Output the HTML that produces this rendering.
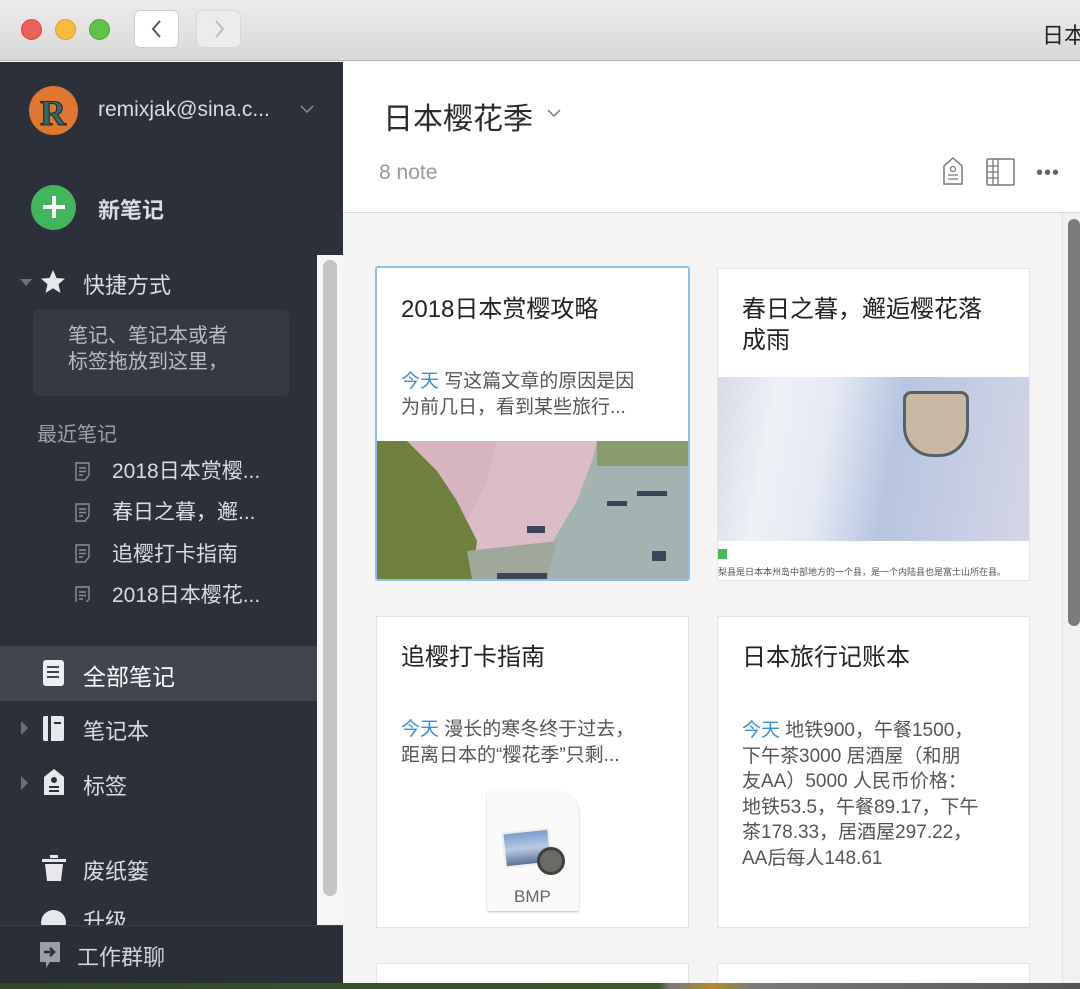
<!DOCTYPE html>
<html><head><meta charset="utf-8"><style>
*{margin:0;padding:0;box-sizing:border-box}
html,body{width:1080px;height:989px;overflow:hidden}
body{position:relative;font-family:"Liberation Sans","Noto Sans CJK SC",sans-serif;background:#f4f4f5}
.a{position:absolute;white-space:nowrap}
.side{color:#d9dce1}
.card{position:absolute;background:#fff;border:1px solid #e4e4e4;overflow:hidden}
.ct{position:absolute;left:24px;font-size:24px;color:#222;line-height:31px}
.cp{position:absolute;left:24px;font-size:19px;color:#555;line-height:26px}
.blue{color:#3a8ed8}
</style></head><body>
<!-- title bar -->
<div class="a" style="left:0;top:0;width:1080px;height:61px;background:linear-gradient(#ececec,#d8d8d8);border-bottom:1px solid #b9b9b9"></div>
<div class="a" style="left:21px;top:19px;width:21px;height:21px;border-radius:50%;background:#ee5f57;border:1px solid #d6483f"></div>
<div class="a" style="left:55px;top:19px;width:21px;height:21px;border-radius:50%;background:#f6bc3a;border:1px solid #dba12b"></div>
<div class="a" style="left:89px;top:19px;width:21px;height:21px;border-radius:50%;background:#5fc446;border:1px solid #49a836"></div>
<div class="a" style="left:134px;top:10px;width:45px;height:38px;background:#fff;border:1px solid #cfcfcf;border-radius:6px"></div>
<svg class="a" style="left:147px;top:17px" width="20" height="24"><path d="M13 4 L6 12 L13 20" stroke="#555" stroke-width="2" fill="none"/></svg>
<div class="a" style="left:196px;top:10px;width:45px;height:38px;background:#ececec;border:1px solid #d8d8d8;border-radius:6px"></div>
<svg class="a" style="left:209px;top:17px" width="20" height="24"><path d="M7 4 L14 12 L7 20" stroke="#bbb" stroke-width="2" fill="none"/></svg>
<div class="a" style="left:1042px;top:18px;font-size:22px;color:#222">日本</div>

<!-- sidebar -->
<div class="a" style="left:0;top:62px;width:343px;height:921px;background:#2b303a"></div>
<div class="a" style="left:29px;top:86px;width:49px;height:49px;border-radius:50%;background:#e0772e"></div>
<div class="a" style="left:40px;top:92px;font-size:36px;font-weight:bold;color:#2f6b6a;font-family:'Liberation Serif',serif;-webkit-text-stroke:1px #222">R</div>
<div class="a side" style="left:98px;top:98px;font-size:21px">remixjak@sina.c...</div>
<svg class="a" style="left:300px;top:104px" width="14" height="10"><path d="M1 2 L7 8 L13 2" stroke="#8b9099" stroke-width="1.5" fill="none"/></svg>
<div class="a" style="left:31px;top:185px;width:45px;height:45px;border-radius:50%;background:#43b55a"></div>
<div class="a" style="left:52px;top:196px;width:4px;height:22px;background:#fff"></div>
<div class="a" style="left:43px;top:205px;width:22px;height:4px;background:#fff"></div>
<div class="a side" style="left:98px;top:193px;font-size:22px;font-weight:bold">新笔记</div>
<svg class="a" style="left:20px;top:279px" width="12" height="8"><path d="M0 0 L12 0 L6 7z" fill="#6b707a"/></svg>
<svg class="a" style="left:40px;top:269px" width="26" height="26"><path d="M13 1 L16.5 9 L25 9.6 L18.5 15.2 L20.5 24 L13 19.3 L5.5 24 L7.5 15.2 L1 9.6 L9.5 9z" fill="#e6e8ec"/></svg>
<div class="a side" style="left:83px;top:268px;font-size:22px">快捷方式</div>
<div class="a" style="left:33px;top:310px;width:256px;height:86px;background:#343944;border-radius:6px"></div>
<div class="a" style="left:68px;top:323px;font-size:20px;color:#b8bcc3;line-height:26px">笔记、笔记本或者<br>标签拖放到这里，</div>
<div class="a" style="left:37px;top:418px;font-size:20px;color:#9da1a9">最近笔记</div>
<svg class="a" style="left:74px;top:462px" width="18" height="140">
<g fill="none" stroke="#8a8f98" stroke-width="1.4">
<path d="M2 1 H15 V13 L11 18 H2z M5 6 H12 M5 9.5 H12 M5 13 H9"/>
<path transform="translate(0,41)" d="M2 1 H15 V13 L11 18 H2z M5 6 H12 M5 9.5 H12 M5 13 H9"/>
<path transform="translate(0,82)" d="M2 1 H15 V13 L11 18 H2z M5 6 H12 M5 9.5 H12 M5 13 H9"/>
<path transform="translate(0,124)" d="M2 1 H15 V13 L11 18 H2z M5 6 H12 M5 9.5 H12 M5 13 H9"/>
</g></svg>
<div class="a side" style="left:112px;top:451px;font-size:21px;line-height:41.3px">2018日本赏樱...<br>春日之暮，邂...<br>追樱打卡指南<br>2018日本樱花...</div>
<div class="a" style="left:0;top:646px;width:317px;height:55px;background:#40454f"></div>
<div class="a" style="left:43px;top:660px;width:21px;height:26px;background:#eef0f3;border-radius:3px"></div>
<div class="a" style="left:47px;top:666px;width:12px;height:2px;background:#40454f;box-shadow:0 5px 0 #40454f,0 10px 0 #40454f"></div>
<div class="a" style="left:83px;top:658px;font-size:23px;color:#fff">全部笔记</div>
<svg class="a" style="left:21px;top:721px" width="8" height="14"><path d="M0 0 L7 7 L0 14z" fill="#6b707a"/></svg>
<div class="a" style="left:43px;top:716px;width:21px;height:25px;background:#e6e8ec;border-radius:2px"></div>
<div class="a" style="left:48px;top:716px;width:3px;height:25px;background:#2b303a"></div>
<div class="a" style="left:54px;top:722px;width:7px;height:2px;background:#2b303a"></div>
<div class="a side" style="left:83px;top:714px;font-size:22px">笔记本</div>
<svg class="a" style="left:21px;top:776px" width="8" height="14"><path d="M0 0 L7 7 L0 14z" fill="#6b707a"/></svg>
<svg class="a" style="left:42px;top:768px" width="24" height="28"><path d="M12 1 L22 9 L22 27 L2 27 L2 9z" fill="#e6e8ec"/><circle cx="12" cy="12" r="3" fill="#2b303a"/><rect x="7" y="18" width="10" height="2" fill="#2b303a"/><rect x="7" y="22" width="10" height="2" fill="#2b303a"/></svg>
<div class="a side" style="left:83px;top:769px;font-size:22px">标签</div>
<svg class="a" style="left:41px;top:854px" width="26" height="28"><rect x="1" y="5" width="24" height="3" fill="#e6e8ec"/><rect x="9" y="1" width="8" height="3" fill="#e6e8ec"/><path d="M4 10 L22 10 L20 27 L6 27z" fill="#e6e8ec"/></svg>
<div class="a side" style="left:83px;top:854px;font-size:22px">废纸篓</div>
<div class="a" style="left:41px;top:910px;width:25px;height:25px;border-radius:50%;background:#e6e8ec"></div>
<div class="a side" style="left:83px;top:904px;font-size:22px">升级</div>
<!-- sidebar scrollbar strip -->
<div class="a" style="left:317px;top:255px;width:26px;height:672px;background:#f6f6f6"></div>
<div class="a" style="left:323px;top:260px;width:14px;height:636px;background:#c3c5c6;border-radius:7px"></div>
<!-- bottom bar -->
<div class="a" style="left:0;top:925px;width:343px;height:58px;background:#2a2e37;border-top:1px solid #3a3f49"></div>
<svg class="a" style="left:38px;top:940px" width="24" height="30"><path d="M2 2 L22 2 L22 22 L12 22 L8 28 L8 22 L2 22z" fill="#9a9ea6"/><path d="M6 12 L16 12 M12 8 L16 12 L12 16" stroke="#2a2e37" stroke-width="2.5" fill="none"/></svg>
<div class="a" style="left:77px;top:940px;font-size:22px;color:#d0d3d8">工作群聊</div>

<!-- main header -->
<div class="a" style="left:343px;top:62px;width:737px;height:151px;background:#fff;border-bottom:1px solid #d9d9d9"></div>
<div class="a" style="left:383px;top:94px;font-size:30px;color:#2a2a2a">日本樱花季</div>
<svg class="a" style="left:547px;top:108px" width="14" height="10"><path d="M1 2 L7 8 L13 2" stroke="#777" stroke-width="1.5" fill="none"/></svg>
<div class="a" style="left:379px;top:161px;font-size:21px;color:#999">8 note</div>
<svg class="a" style="left:941px;top:156px" width="24" height="30"><path d="M12 2 L21 10 L21 28 L3 28 L3 10z" fill="none" stroke="#777" stroke-width="1.5"/><circle cx="12" cy="13" r="2.5" fill="none" stroke="#777" stroke-width="1.3"/><path d="M7 19 H17 M7 23 H17" stroke="#777" stroke-width="1.3"/></svg>
<svg class="a" style="left:986px;top:158px" width="30" height="28"><rect x="1" y="1" width="27" height="26" fill="none" stroke="#777" stroke-width="1.5" rx="1"/><path d="M7 1 V27 M12 1 V27 M1 8 H12 M1 14 H12 M1 20 H12" stroke="#777" stroke-width="1.3"/></svg>
<div class="a" style="left:1036px;top:162px;font-size:20px;color:#666;letter-spacing:1px">•••</div>

<!-- right scrollbar -->
<div class="a" style="left:1062px;top:213px;width:18px;height:770px;background:#f1f1f1;border-left:1px solid #e2e2e2"></div>
<div class="a" style="left:1068px;top:219px;width:12px;height:407px;background:#7c7c7c;border-radius:6px"></div>

<!-- card 1 -->
<div class="card" style="left:375px;top:266px;width:315px;height:315px;border:2px solid #8cc0ec;border-radius:3px">
<div class="ct" style="top:26px">2018日本赏樱攻略</div>
<div class="cp" style="top:101px"><span class="blue">今天</span> 写这篇文章的原因是因<br>为前几日，看到某些旅行...</div>
<svg class="a" style="left:0;top:173px" width="311" height="138">
<rect width="311" height="138" fill="#a3b3b2"/>
<rect x="220" y="0" width="91" height="25" fill="#8a9a6a"/>
<path d="M0 0 H220 L215 20 L200 60 L170 110 L150 138 H0z" fill="#dcbcc6"/>
<path d="M0 0 H60 L80 60 L100 100 L95 138 H0z" fill="#6f7f3c"/>
<path d="M30 0 H120 L110 40 L90 80 L80 60 L60 30z" fill="#d8b4c0"/>
<path d="M90 110 L180 100 L170 138 H95z" fill="#9fa89a"/>
<rect x="120" y="132" width="50" height="6" fill="#3a4658"/>
<rect x="150" y="85" width="18" height="7" fill="#3a4658"/>
<rect x="275" y="110" width="14" height="10" fill="#3a4658"/>
<rect x="260" y="50" width="30" height="5" fill="#3a4658"/>
<rect x="230" y="60" width="20" height="5" fill="#3a4658"/>
</svg>
</div>
<!-- card 2 -->
<div class="card" style="left:717px;top:268px;width:313px;height:313px">
<div class="ct" style="top:25px">春日之暮，邂逅樱花落<br>成雨</div>
<div class="a" style="left:0;top:108px;width:313px;height:164px;background:linear-gradient(100deg,#d6dbe8 0%,#eef1f6 18%,#e4e9f3 35%,#b7c5e2 55%,#c5cce3 75%,#d4d6e6 100%)"></div>
<div class="a" style="left:185px;top:122px;width:66px;height:66px;background:#c9b9a3;border:3px solid #57606a;border-radius:8px 8px 30px 30px"></div>
<div class="a" style="left:0;top:280px;width:9px;height:10px;background:#4bb85a"></div>
<div class="a" style="left:0;top:296px;font-size:9px;color:#555">梨县是日本本州岛中部地方的一个县，是一个内陆县也是富士山所在县。</div>
</div>
<!-- card 3 -->
<div class="card" style="left:376px;top:616px;width:313px;height:312px">
<div class="ct" style="top:25px">追樱打卡指南</div>
<div class="cp" style="top:100px"><span class="blue">今天</span> 漫长的寒冬终于过去，<br>距离日本的“樱花季”只剩...</div>
<div class="a" style="left:110px;top:175px;width:92px;height:119px;background:#fafafa;box-shadow:0 1px 2px rgba(0,0,0,.25);border-radius:2px 20px 2px 2px"></div>
<div class="a" style="left:126px;top:213px;width:48px;height:36px;background:linear-gradient(180deg,#7a9ccf,#b9cbe3 50%,#5b7195);border:2px solid #eee;transform:rotate(-6deg)"></div>
<div class="a" style="left:160px;top:230px;width:28px;height:28px;border-radius:50%;background:#6a6a66;border:3px solid #3f3f3c"></div>
<div class="a" style="left:137px;top:270px;font-size:17px;color:#666">BMP</div>
</div>
<!-- card 4 -->
<div class="card" style="left:717px;top:616px;width:313px;height:312px">
<div class="ct" style="top:25px">日本旅行记账本</div>
<div class="cp" style="top:101px;line-height:25.6px"><span class="blue">今天</span> 地铁900，午餐1500，<br>下午茶3000 居酒屋（和朋<br>友AA）5000 人民币价格：<br>地铁53.5，午餐89.17，下午<br>茶178.33，居酒屋297.22，<br>AA后每人148.61</div>
</div>
<!-- row 3 -->
<div class="card" style="left:376px;top:963px;width:313px;height:20px;border-bottom:none"></div>
<div class="card" style="left:717px;top:963px;width:313px;height:20px;border-bottom:none"></div>
<div class="a" style="left:0;top:983px;width:1080px;height:6px;background:linear-gradient(90deg,#2f4a24 0%,#3d5a2a 61%,#7a7a7a 62%,#b08a30 66%,#7a7a7a 70%,#555 100%)"></div>
</body></html>
